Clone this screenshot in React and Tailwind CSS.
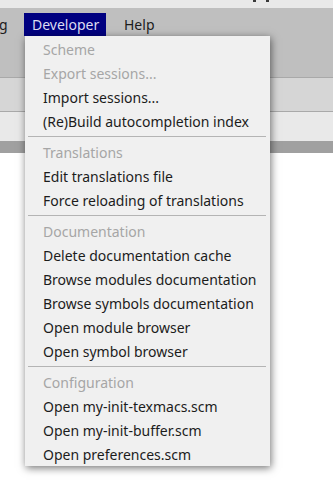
import React from 'react';

const sections = [
  {
    title: 'Scheme',
    items: [
      { label: 'Export sessions...', disabled: true },
      { label: 'Import sessions...' },
      { label: '(Re)Build autocompletion index' },
    ],
  },
  {
    title: 'Translations',
    items: [{ label: 'Edit translations file' }, { label: 'Force reloading of translations' }],
  },
  {
    title: 'Documentation',
    items: [
      { label: 'Delete documentation cache' },
      { label: 'Browse modules documentation' },
      { label: 'Browse symbols documentation' },
      { label: 'Open module browser' },
      { label: 'Open symbol browser' },
    ],
  },
  {
    title: 'Configuration',
    items: [
      { label: 'Open my-init-texmacs.scm' },
      { label: 'Open my-init-buffer.scm' },
      { label: 'Open preferences.scm' },
    ],
  },
];

function MenuItem({ label, disabled }) {
  return (
    <div
      className={`h-6 leading-[26px] pl-[18px] pr-4 whitespace-nowrap ${
        disabled ? 'text-[#a6a6a6]' : 'text-[#1c1c1c]'
      }`}
    >
      {label}
    </div>
  );
}

export default function App() {
  return (
    <div
      className="relative w-[333px] h-[486px] overflow-hidden bg-white text-[14px]"
      style={{ fontFamily: '"Noto Sans", "Open Sans", sans-serif' }}
    >
      {/* title strip */}
      <div className="h-2 bg-[#e9e9e9] flex gap-[10px] pl-[253px]">
        <span className="w-[3px] h-[2px] bg-[#3a3a3a]" />
        <span className="w-[3px] h-[2px] bg-[#3a3a3a]" />
      </div>

      {/* menu bar */}
      <div className="h-7 bg-[#bfbfbf] flex items-end">
        <span className="w-[25px] h-[23px] leading-[23px] text-[#1c1c1c] -ml-[1px]">g</span>
        <span className="h-[23px] leading-[23px] px-2 w-[82px] bg-[#000080] text-[#dcdcf2]">
          Developer
        </span>
        <span className="h-[23px] leading-[23px] ml-[18px] text-[#1c1c1c]">Help</span>
      </div>

      {/* toolbars */}
      <div className="h-[42px] bg-[#bfbfbf] border-b border-[#a9a9a9]" />
      <div className="h-[34px] bg-[#d6d6d6] border-b border-[#a9a9a9]" />
      <div className="h-[29px] bg-[#e9e9e9]" />
      <div className="h-3 bg-[#a0a0a0]" />

      {/* dropdown */}
      <div className="absolute left-[25px] top-[36px] w-[245px] pt-px bg-[#f0f0f0] shadow-[1px_2px_8px_rgba(0,0,0,0.55)]">
        {sections.map((s, i) => (
          <div key={s.title}>
            {i > 0 && (
              <div className="py-[3px] pl-[3px] pr-[4px]">
                <div className="h-px bg-[#b4b4b4]" />
              </div>
            )}
            <MenuItem label={s.title} disabled />
            {s.items.map((it) => (
              <MenuItem key={it.label} {...it} />
            ))}
          </div>
        ))}
      </div>
    </div>
  );
}
